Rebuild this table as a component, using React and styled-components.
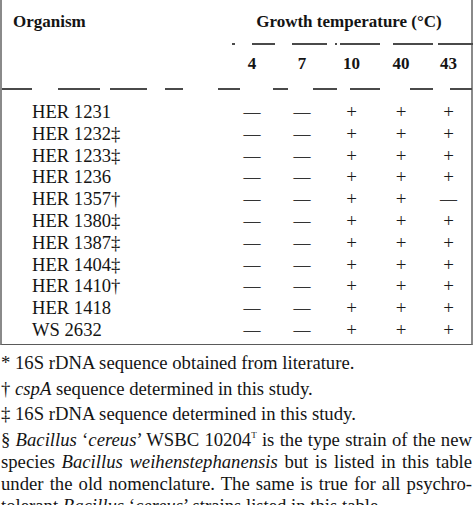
import React from "react";
import styled, { createGlobalStyle } from "styled-components";

const GlobalStyle = createGlobalStyle`
  html, body {
    margin: 0;
    padding: 0;
    background: #fff;
  }
  body {
    font-family: "Liberation Serif", "Times New Roman", serif;
    color: #141414;
  }
`;

const Page = styled.div`
  width: 474px;
  overflow: hidden;
`;

const Frame = styled.div`
  width: 473px;
  height: 345px;
  box-sizing: border-box;
  border-left: 2px solid #8a8a8a;
  border-right: 2px solid #8a8a8a;
  border-bottom: 1.5px solid #5a5a5a;
`;

const Grid = styled.div`
  display: grid;
  grid-template-columns: 225px 50px 50px 49px 50px 45px;
`;

const HeadCell = styled.div`
  font-weight: bold;
  font-size: 17px;
  height: ${p => p.$h}px;
  box-sizing: border-box;
  padding-bottom: ${p => p.$pb || 0}px;
  display: flex;
  align-items: center;
  justify-content: ${p => (p.$left ? "flex-start" : "center")};
  padding-left: ${p => (p.$left ? "11px" : "0")};
  grid-column: ${p => p.$span || "auto"};
`;

const RuleRow = styled.div`
  grid-column: ${p => p.$span};
  height: 2px;
  display: flex;
  align-items: center;
`;

const Dash = styled.span`
  display: block;
  height: 1.5px;
  background: #4a4a4a;
  margin-left: ${p => p.$gap}px;
  width: ${p => p.$w}px;
  flex: none;
`;

const Body = styled.div`
  grid-column: 1 / 7;
  display: grid;
  grid-template-columns: subgrid;
  padding-top: 11px;
`;

const NameCell = styled.div`
  font-size: 18.6px;
  height: 21.8px;
  line-height: 21.8px;
  padding-left: 30px;
  white-space: nowrap;
`;

const SignCell = styled.div`
  height: 21.8px;
  line-height: 21.8px;
  text-align: center;
  font-size: ${p => (p.$plus ? "19px" : "17px")};
  color: ${p => (p.$plus ? "#1a1a1a" : "#333")};
`;

const Notes = styled.div`
  padding: 7px 1px 0 1px;
  width: 471px;
  font-size: 18.7px;
  line-height: 22px;
`;

const Note = styled.p`
  margin: 0 0 3.5px 0;
  text-align: ${p => (p.$justify ? "justify" : "left")};
  text-align-last: left;
  white-space: ${p => (p.$justify ? "normal" : "nowrap")};
`;

const Sup = styled.sup`
  font-size: 9px;
  vertical-align: 8px;
  line-height: 0;
`;

const rows = [
  ["HER 1231", "", "--+++"],
  ["HER 1232", "‡", "--+++"],
  ["HER 1233", "‡", "--+++"],
  ["HER 1236", "", "--+++"],
  ["HER 1357", "†", "--++-"],
  ["HER 1380", "‡", "--+++"],
  ["HER 1387", "‡", "--+++"],
  ["HER 1404", "‡", "--+++"],
  ["HER 1410", "†", "--+++"],
  ["HER 1418", "", "--+++"],
  ["WS 2632", "", "--+++"],
];

const temps = ["4", "7", "10", "40", "43"];

// broken scan rules, [start, end] in px from the rule's left edge
const topRule = [[5, 8], [25, 48], [65, 100], [108, 110], [113, 153], [166, 206], [211, 246]];
const midRule = [[0, 30], [56, 98], [108, 145], [163, 181], [216, 238], [271, 286], [311, 335], [348, 378], [408, 431], [448, 470]];

const Rule = ({ segs, span }) => {
  let prev = 0;
  return (
    <RuleRow $span={span}>
      {segs.map(([a, b]) => {
        const gap = a - prev;
        prev = b;
        return <Dash key={a} $gap={gap} $w={b - a} />;
      })}
    </RuleRow>
  );
};

export default function App() {
  return (
    <Page>
      <GlobalStyle />
      <Frame>
        <Grid>
          <HeadCell $left $h={43}>Organism</HeadCell>
          <HeadCell $h={43} $span="2 / 7">Growth temperature (°C)</HeadCell>
          <RuleRow $span="1 / 2" />
          <Rule segs={topRule} span="2 / 7" />
          <HeadCell $h={43} $pb={6} />
          {temps.map(t => (
            <HeadCell key={t} $h={43} $pb={6}>{t}</HeadCell>
          ))}
          <Rule segs={midRule} span="1 / 7" />
          <Body>
            {rows.map(([name, mark, signs]) => (
              <React.Fragment key={name}>
                <NameCell>{name}{mark}</NameCell>
                {signs.split("").map((s, i) => (
                  <SignCell key={i} $plus={s === "+"}>{s === "+" ? "+" : "—"}</SignCell>
                ))}
              </React.Fragment>
            ))}
          </Body>
        </Grid>
      </Frame>
      <Notes>
        <Note>* 16S rDNA sequence obtained from literature.</Note>
        <Note>† <i>cspA</i> sequence determined in this study.</Note>
        <Note>‡ 16S rDNA sequence determined in this study.</Note>
        <Note $justify>
          § <i>Bacillus</i> ‘<i>cereus</i>’ WSBC 10204<Sup>T</Sup> is the type strain of the new species{" "}
          <i>Bacillus weihenstephanensis</i> but is listed in this table under the old nomenclature. The
          same is true for all psychro-tolerant <i>Bacillus</i> ‘<i>cereus</i>’ strains listed in this table.
        </Note>
      </Notes>
    </Page>
  );
}
